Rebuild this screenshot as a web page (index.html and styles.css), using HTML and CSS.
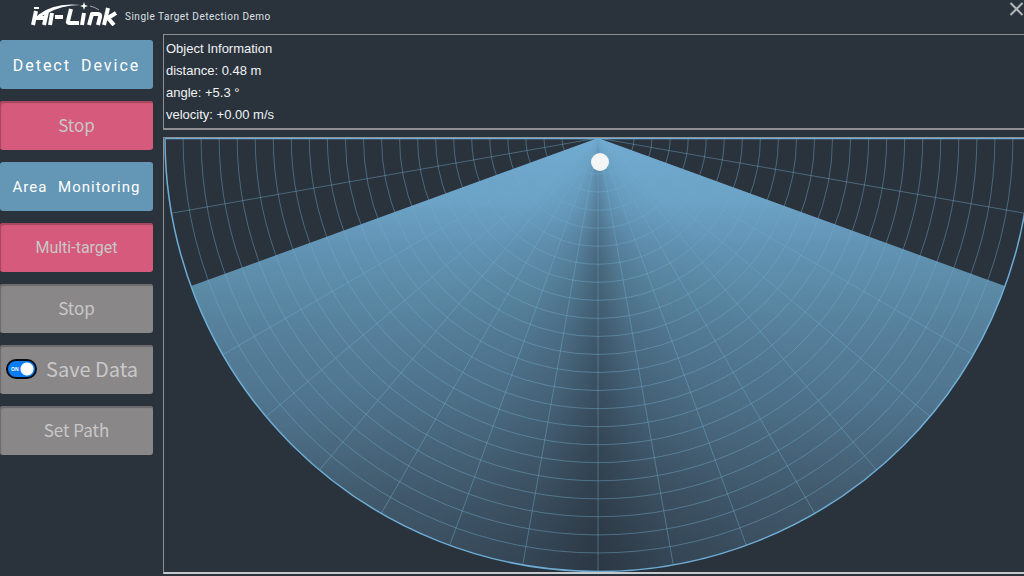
FILE: index.html
```html
<!DOCTYPE html>
<html lang="en">
<head>
<meta charset="utf-8">
<title>Hi-Link Single Target Detection Demo</title>
<link rel="stylesheet" href="styles.css">
</head>
<body>
<div class="app">
  <header class="topbar">
    <svg class="logo" viewBox="0 0 88 24" role="img" aria-label="Hi-Link">
      <g fill="none" stroke="#fff" stroke-width="4" stroke-linejoin="round">
        <path d="M6 9L3 23M17 10L14 23M5 16H15"/>
        <path d="M22 11L20 23M25 15H33"/>
        <path d="M41 7L38 19Q37 21 40 21H49"/>
        <path d="M54 11L52 23M59 23L62 12H68Q71 12 70 15L68 23"/>
        <path d="M78 6L74 23M86 11L78 16L84 23"/>
      </g>
      <path d="M4 6H9" stroke="#fff" stroke-width="2"/>
      <path d="M8 13Q24 0 51 3Q31 3 16 12L6 17Z" fill="#fff"/>
      <path d="M54 0L55 3L58 4L55 5L54 8L53 5L50 4L53 3Z" fill="#fff"/>
      <path d="M60 4Q65 5 69 8" fill="none" stroke="#aeb3b8" stroke-width=".9"/>
    </svg>
    <h1 class="title">Single Target Detection Demo</h1>
    <button class="close" aria-label="Close">
      <svg viewBox="0 0 14 14" class="close-icon"><path d="M1 1L13 13M13 1L1 13"/></svg>
    </button>
  </header>
  <div class="body">
    <nav class="sidebar">
      <button class="btn blue wide">Detect Device</button>
      <button class="btn pink">Stop</button>
      <button class="btn blue area">Area Monitoring</button>
      <button class="btn pink multi">Multi-target</button>
      <button class="btn gray">Stop</button>
      <label class="btn gray save">
        <span class="switch"><input class="switch-input" type="checkbox" checked><span class="switch-text">ON</span></span>
        <span>Save Data</span>
      </label>
      <button class="btn gray">Set Path</button>
    </nav>
    <main class="content">
      <section class="info">
        <p>Object Information</p>
        <p>distance: 0.48 m</p>
        <p>angle: +5.3 °</p>
        <p>velocity: +0.00 m/s</p>
      </section>
      <section class="radar">
        <svg class="chart" viewBox="0 0 860 434" role="img" aria-label="Detection area">
          <defs>
            <clipPath id="sector-clip"><path id="sector-shape" transform="translate(434 0)"/></clipPath>
          </defs>
          <g clip-path="url(#sector-clip)">
            <foreignObject width="868" height="434"><div class="beam"><div class="shade"></div></div></foreignObject>
          </g>
          <g id="plot" transform="translate(434 0)"></g>
        </svg>
      </section>
    </main>
  </div>
</div>
<script src="radar.js"></script>
</body>
</html>
```
FILE: styles.css
```css
* { box-sizing: border-box; }
body { margin: 0; background: #2a323c; color: #f0f2f4; font-family: "Liberation Sans", Arial, sans-serif; overflow: hidden; }
button { font: inherit; border: 0; cursor: pointer; }
.app { min-height: 100vh; }
.topbar { display: flex; align-items: center; height: 34px; padding-left: 30px; }
.logo { width: 88px; height: 24px; margin-bottom: 6px; }
.title { flex: 1; margin: 0 0 2px 7px; color: #dde0e3; font: 400 10px Roboto, sans-serif; letter-spacing: 0.5px; }
.close { align-self: flex-start; padding: 2px 0; background: none; }
.close-icon { display: block; width: 15px; height: 14px; fill: none; stroke: #b4b7ba; stroke-width: 2; }
.body { display: flex; gap: 10px; }
.sidebar { display: flex; flex-direction: column; gap: 12px; width: 153px; padding-top: 6px; flex: none; }
.btn { display: flex; align-items: center; justify-content: center; height: 49px; padding: 0 0 2px; border-radius: 3px; font-family: "Noto Sans CJK SC", sans-serif; font-size: 17px; color: #c9c7c8; white-space: pre; }
.blue { padding: 2px 0 0; background: #6496b5; color: #fff; font-family: Roboto, sans-serif; font-size: 16px; letter-spacing: 2px; word-spacing: 4px; }
.area { padding: 0; font-size: 15px; letter-spacing: 1px; word-spacing: 6px; }
.pink { background: #d55a7b; box-shadow: inset 1px 2px 1px #a64660; }
.multi { padding: 0; font-family: Roboto, sans-serif; font-size: 16px; }
.gray { background: #8a8788; box-shadow: inset 1px 2px 1px #6c6a6c; }
.save { justify-content: flex-start; gap: 9px; padding-left: 6px; font-size: 20px; cursor: pointer; }
.switch { display: grid; align-items: center; width: 31px; height: 20px; }
.switch-input { grid-area: 1 / 1; appearance: none; width: 31px; height: 20px; margin: 0; border: 2px solid #080c12; border-radius: 10px; background: radial-gradient(circle at 19px 8px, #fff 6px, #0a7cf5 7px); }
.switch-text { grid-area: 1 / 1; z-index: 1; padding-left: 5px; font: 700 5px "Liberation Sans", sans-serif; color: #fff; }
.content { flex: 1; min-width: 0; }
.info { padding: 3px 2px 2px; border: solid #8d8f93; border-width: 1px 0 2px 1px; font-size: 13px; line-height: 22px; }
.info p { margin: 0; }
.radar { margin-top: 7px; border: solid #8d8f93; border-width: 1px 0 2px 1px; border-bottom-color: #c4c8cc; }
.chart { display: block; width: 100%; height: auto; }
.beam { height: 100%; background: linear-gradient(#71abd1, #6ba2c5 15%, #6293b4 25%, #5b8ba6 34%, #567f9b 45%, #4f738c 62%, #445e72 82%, #3b5062); }
.shade {
  height: 100%;
  background: conic-gradient(from 90deg at 50% 0, #28313b00 45deg, #28313b26 68deg, #28313b66 81deg, #28313bcc 90deg, #28313b66 99deg, #28313b26 112deg, #28313b00 135deg);
  mask-image: linear-gradient(#0003, #0008 25%, #000b 60%, #000);
}
.grid-line { fill: none; stroke: #71aacb; stroke-opacity: .45; stroke-width: 1; }
.outline { fill: none; stroke: #6eadd5; stroke-width: 1.5; }
.target { fill: #f3f5f6; }
```
FILE: radar.js
```js
const R = 433;
const plot = document.getElementById("plot");

function add(tag, attrs) {
  const el = document.createElementNS("http://www.w3.org/2000/svg", tag);
  for (const key in attrs) el.setAttribute(key, attrs[key]);
  plot.appendChild(el);
}

function point(deg) {
  const a = deg * Math.PI / 180;
  return [R * Math.cos(a), R * Math.sin(a)];
}

const [sx, sy] = point(20);
document.getElementById("sector-shape")
  .setAttribute("d", `M0 0L${sx} ${sy}A${R} ${R} 0 0 1 ${-sx} ${sy}Z`);

for (let i = 2; i < 24; i++) {
  const r = R * i / 24;
  add("path", { class: "grid-line", d: `M${r} 0A${r} ${r} 0 0 1 ${-r} 0` });
}
for (let deg = 10; deg < 180; deg += 10) {
  if (deg === 20 || deg === 160) continue;
  const [x, y] = point(deg);
  add("path", { class: "grid-line", d: `M0 0L${x} ${y}` });
}
add("path", { class: "outline", d: `M${-R} 0.5H${R}A${R} ${R} 0 0 1 ${-R} 0.5` });
add("circle", { class: "target", cx: 2, cy: 24, r: 9 });
```
